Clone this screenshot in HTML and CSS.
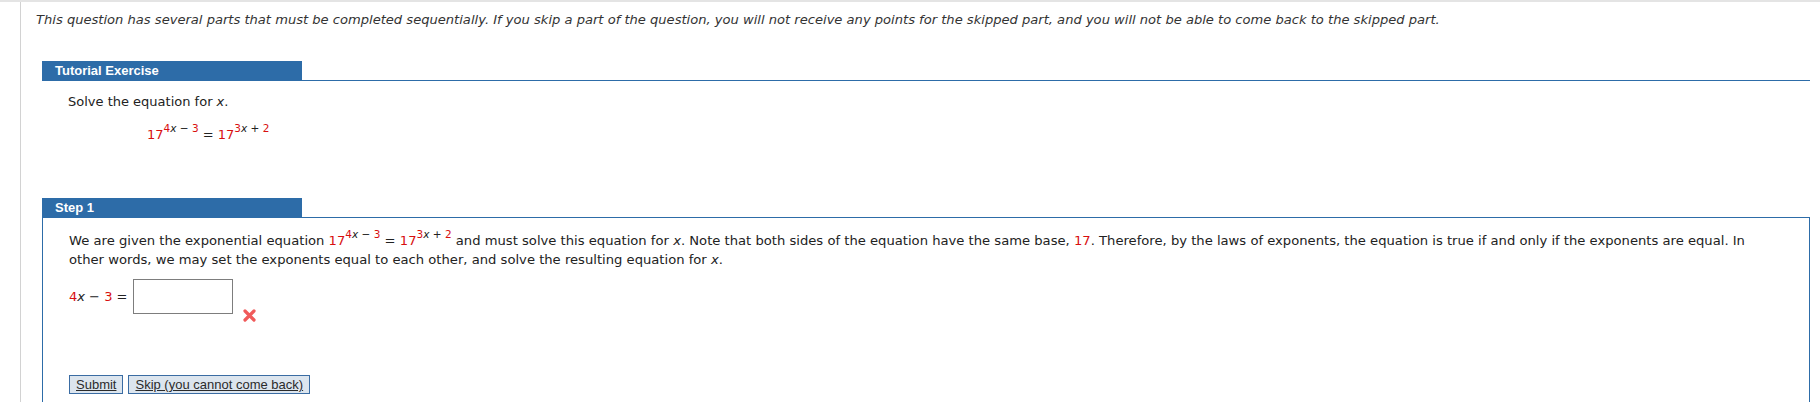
FILE: index.html
```html
<!DOCTYPE html>
<html lang="en">
<head>
    <meta charset="UTF-8">
    <meta name="viewport" content="width=device-width, initial-scale=1.0">
    <title>Tutorial Exercise</title>
    <link rel="stylesheet" href="styles.css">
</head>
<body>
    <div class="question">
        <p class="note">This question has several parts that must be completed sequentially. If you skip a part of the question, you will not receive any points for the skipped part, and you will not be able to come back to the skipped part.</p>

        <div class="section tutorial">
            <div class="section-head"><span class="tab">Tutorial Exercise</span></div>
            <div class="tutorial-body">
                <p>Solve the equation for <i>x</i>.</p>
                <p class="equation">
                    <span class="red">17</span><sup><span class="red">4</span><i>x</i> &minus; <span class="red">3</span></sup>
                    = <span class="red">17</span><sup><span class="red">3</span><i>x</i> + <span class="red">2</span></sup>
                </p>
            </div>
        </div>

        <div class="section step">
            <div class="section-head"><span class="tab">Step 1</span></div>
            <div class="step-box">
                <p class="explain">We are given the exponential equation <span class="red">17</span><sup><span class="red">4</span><i>x</i> &minus; <span class="red">3</span></sup> = <span class="red">17</span><sup><span class="red">3</span><i>x</i> + <span class="red">2</span></sup> and must solve this equation for <i>x</i>. Note that both sides of the equation have the same base, <span class="red">17</span>. Therefore, by the laws of exponents, the equation is true if and only if the exponents are equal. In other words, we may set the exponents equal to each other, and solve the resulting equation for <i>x</i>.</p>

                <div class="answer-row">
                    <span class="answer-label"><span class="red">4</span><i>x</i> &minus; <span class="red">3</span> =</span>
                    <input class="answer-input" type="text">
                    <svg class="wrong" width="13" height="13" viewBox="0 0 13 13">
                        <path d="M2 2 L11 11 M11 2 L2 11" stroke="#f05a5a" stroke-width="3.2" stroke-linecap="round"/>
                    </svg>
                </div>

                <div class="actions">
                    <button class="btn">Submit</button>
                    <button class="btn">Skip (you cannot come back)</button>
                </div>
            </div>
        </div>
    </div>
</body>
</html>
```

FILE: styles.css
```css
body {
    margin: 0;
    font-family: "DejaVu Sans", Verdana, sans-serif;
    font-size: 13px;
    color: #222;
    background: #fff;
    border-top: 2px solid #e4e4e4;
}

p {
    margin: 0;
}

.red {
    color: #d80f0f;
}

i {
    font-style: italic;
}

.question {
    margin-left: 20px;
    border-left: 1px solid #d2d2d2;
    padding: 10px 10px 0 15px;
}

.note {
    font-style: italic;
    font-size: 13.08px;
    color: #333;
    line-height: 16px;
}

.section {
    margin-left: 6px;
}

.tutorial {
    margin-top: 33px;
}

.step {
    margin-top: 55px;
}

.section-head {
    display: flex;
    border-bottom: 1px solid #2d6ca8;
}

.tab {
    width: 247px;
    height: 19px;
    padding-left: 13px;
    background: #2d6ca8;
    color: #fff;
    font-family: "Liberation Sans Narrow", "Arial Narrow", "Liberation Sans", Arial, sans-serif;
    font-weight: bold;
    font-size: 13px;
    line-height: 19px;
}

.tutorial-body {
    padding: 13px 0 0 26px;
    line-height: 16px;
}

.equation {
    margin-top: 17px;
    padding-left: 79px;
}

sup {
    font-size: 10.5px;
    line-height: 0;
    vertical-align: 7px;
}

.step-box {
    border: 1px solid #2d6ca8;
    border-top: none;
    padding: 14px 26px 30px 26px;
}

.explain {
    font-size: 13.15px;
    line-height: 18.5px;
}

.answer-row {
    display: flex;
    align-items: flex-start;
    margin-top: 10px;
}

.answer-label {
    line-height: 35px;
    margin-right: 6px;
}

.answer-input {
    width: 98px;
    height: 33px;
    margin: 0;
    padding: 0;
    border: 1px solid #7d7d7d;
    border-radius: 0;
}

.wrong {
    margin: 30px 0 0 10px;
}

.actions {
    display: flex;
    gap: 5px;
    margin-top: 53px;
}

.btn {
    height: 19px;
    padding: 0 6px;
    background: #dce5ee;
    border: 1px solid #3a6ca3;
    border-radius: 0;
    color: #2b2b2b;
    font-family: "Liberation Sans", Arial, sans-serif;
    font-size: 13px;
    line-height: 17px;
    text-decoration: underline;
    cursor: pointer;
}
```
